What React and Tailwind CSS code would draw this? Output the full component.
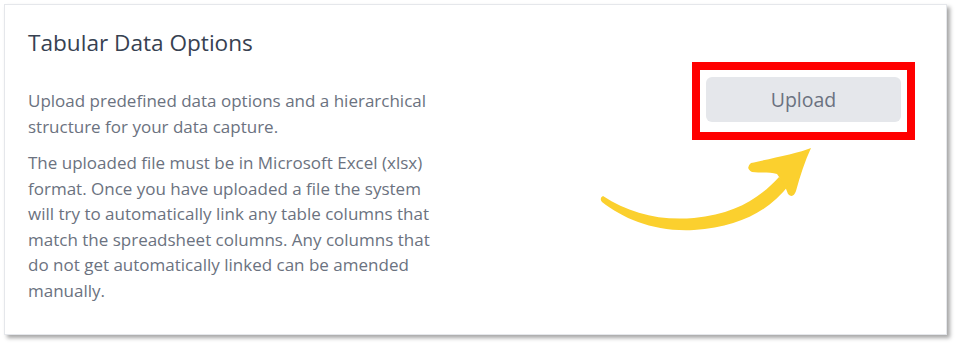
import React from "react";

// hand drawn yellow arrow pointing at the upload button
const Arrow = () => (
  <svg
    className="absolute left-[594px] top-[136px]"
    width="220"
    height="95"
    viewBox="0 0 220 95"
    fill="none"
  >
    <path
      d="M4 55 C 30 72, 60 80, 95 77 C 135 73, 160 58, 180 36 L 190 44 C 170 70, 140 86, 95 89 C 55 91, 25 78, 3 61 Q 0 57, 4 55 Z"
      fill="#fbd02e"
    />
    <path
      d="M212 7 C 200 12, 170 18, 152 22 Q 146 27, 153 31 C 163 32, 172 31, 178 33 C 183 40, 187 47, 189 53 Q 194 58, 197 50 C 201 35, 206 20, 212 7 Z"
      fill="#fbd02e"
    />
  </svg>
);

const App = () => {
  return (
    <div
      className="w-[959px] h-[349px] bg-white p-[4px]"
      style={{ fontFamily: "'Open Sans', 'Noto Sans', sans-serif" }}
    >
      <div className="relative w-[943px] h-[331px] bg-white border border-gray-200 shadow-[3px_3px_4px_rgba(0,0,0,0.35)]">
        <div className="flex pl-[23px] pr-[31px] pt-[24px]">
          <div className="w-[418px]">
            <h2 className="text-[22.6px] leading-[28px] text-[#374151] font-normal">
              Tabular Data Options
            </h2>
            <p className="mt-[31px] text-[17px] leading-[25.5px] text-[#6b7280]">
              Upload predefined data options and a hierarchical structure for your data capture.
            </p>
            <p className="mt-[11px] text-[17px] leading-[25.5px] text-[#6b7280]">
              The uploaded file must be in Microsoft Excel (xlsx) format. Once you have uploaded a
              file the system will try to automatically link any table columns that match the
              spreadsheet columns. Any columns that do not get automatically linked can be amended
              manually.
            </p>
          </div>
          <div className="flex-1 flex justify-end items-start">
            {/* red highlight box */}
            <div className="mt-[33px] w-[223px] h-[78px] border-[8px] border-[#ff0000] pl-[6px] pt-[7px]">
              <button className="w-[195px] h-[45px] rounded-md bg-[#e5e7eb] text-[#6b7280] text-[19.5px]">
                Upload
              </button>
            </div>
          </div>
        </div>
        <Arrow />
      </div>
    </div>
  );
};

export default App;
